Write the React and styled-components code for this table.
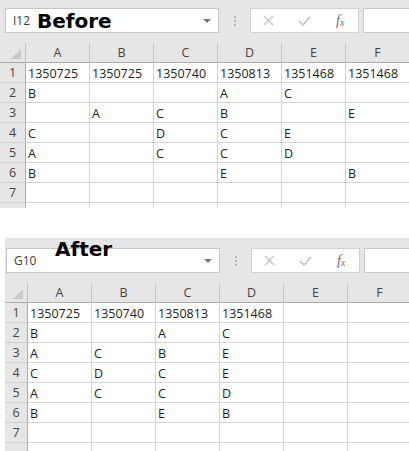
// Styled Components
import styled, { createGlobalStyle } from "styled-components";

const COLUMNS = ["A", "B", "C", "D", "E", "F"];

const before = [
    ["1350725", "1350725", "1350740", "1350813", "1351468", "1351468"],
    ["B", "", "", "A", "C", ""],
    ["", "A", "C", "B", "", "E"],
    ["C", "", "D", "C", "E", ""],
    ["A", "", "C", "C", "D", ""],
    ["B", "", "", "E", "", "B"],
    ["", "", "", "", "", ""],
];

const after = [
    ["1350725", "1350740", "1350813", "1351468", "", ""],
    ["B", "", "A", "C", "", ""],
    ["A", "C", "B", "E", "", ""],
    ["C", "D", "C", "E", "", ""],
    ["A", "C", "C", "D", "", ""],
    ["B", "", "E", "B", "", ""],
    ["", "", "", "", "", ""],
];

// empty row that peeks out under the last numbered one
const filler = ["", "", "", "", "", ""];

const Sheet = ({ name, title, titleLeft, titleTop, data, padTop, boxLeft, headWidth, gridHeight, left, top }) => {
    return (
        <SheetFrame $left={left} $top={top}>

            {/* Name box and formula bar */}
            <Toolbar $padTop={padTop}>
                <NameBox $left={boxLeft}>
                    <NameText>{name}</NameText>
                    <Caret />
                </NameBox>

                <Grip>
                    <span />
                    <span />
                    <span />
                </Grip>

                <FormulaButtons>
                    <IconSlot>
                        <svg width="11" height="11" viewBox="0 0 11 11">
                            <path d="M1 1 L10 10 M10 1 L1 10" stroke="#c4c4c4" strokeWidth="1.4" fill="none" />
                        </svg>
                    </IconSlot>
                    <IconSlot>
                        <svg width="13" height="10" viewBox="0 0 13 10">
                            <path d="M1 5 L5 9 L12 1" stroke="#c4c4c4" strokeWidth="1.6" fill="none" />
                        </svg>
                    </IconSlot>
                    <IconSlot>
                        <Fx>f<sub>x</sub></Fx>
                    </IconSlot>
                </FormulaButtons>

                <FormulaInput />
            </Toolbar>

            {/* Grid */}
            <Grid $head={headWidth} $height={gridHeight}>
                <Corner>
                    <CornerTriangle />
                </Corner>
                {COLUMNS.map((col) => (
                    <ColHeader key={col}>{col}</ColHeader>
                ))}

                {[...data, filler].map((row, r) => (
                    <Row key={r}>
                        <RowHeader>{r < data.length ? r + 1 : ""}</RowHeader>
                        {row.map((value, c) => (
                            <Cell key={c}>{value}</Cell>
                        ))}
                    </Row>
                ))}
            </Grid>

            <Title $left={titleLeft} $top={titleTop}>{title}</Title>
        </SheetFrame>
    );
};

const App = () => {
    return (
        <Page>
            <GlobalStyle />

            <Sheet
                name="I12"
                title="Before"
                titleLeft={37}
                titleTop={9}
                data={before}
                padTop={8}
                boxLeft={5}
                headWidth={26}
                gridHeight={165}
                left={0}
                top={0}
            />

            <Sheet
                name="G10"
                title="After"
                titleLeft={50}
                titleTop={-1}
                data={after}
                padTop={10}
                boxLeft={1}
                headWidth={23}
                gridHeight={170}
                left={5}
                top={30}
            />

        </Page>
    );
};

const GlobalStyle = createGlobalStyle`
    html, body {
        margin: 0;
        padding: 0;
        background: #ffffff;
    }

    body {
        width: 409px;
        height: 451px;
        overflow: hidden;
        font-family: "Open Sans", "DejaVu Sans", sans-serif;
    }
`

const Page = styled.main`
    width: 409px;
    height: 451px;
    overflow: hidden;
    display: flex;
    flex-direction: column;
`

const SheetFrame = styled.section`
    position: relative;
    flex: none;
    margin-left: ${(p) => p.$left}px;
    margin-top: ${(p) => p.$top}px;
    background: #e6e6e6;
`

const Toolbar = styled.div`
    display: flex;
    align-items: center;
    overflow: hidden;
    padding-top: ${(p) => p.$padTop}px;
    padding-bottom: 10px;
    background: #e6e6e6;
`

const NameBox = styled.div`
    box-sizing: border-box;
    width: 214px;
    height: 25px;
    flex: none;
    margin-left: ${(p) => p.$left}px;
    display: flex;
    align-items: center;
    justify-content: space-between;
    padding: 0 7px;
    background: #ffffff;
    border: 1px solid #c6c6c6;
`

const NameText = styled.span`
    font-size: 12px;
    color: #3c3c3c;
`

const Caret = styled.span`
    width: 0;
    height: 0;
    border-left: 4px solid transparent;
    border-right: 4px solid transparent;
    border-top: 4px solid #777777;
`

const Grip = styled.div`
    width: 31px;
    flex: none;
    display: flex;
    flex-direction: column;
    align-items: center;
    gap: 2px;

    span {
        width: 2px;
        height: 2px;
        background: #b4b4b4;
    }
`

const FormulaButtons = styled.div`
    box-sizing: border-box;
    width: 109px;
    height: 25px;
    flex: none;
    display: grid;
    grid-template-columns: repeat(3, 1fr);
    align-items: center;
    background: #ffffff;
    border: 1px solid #d2d2d2;
`

const IconSlot = styled.div`
    display: flex;
    align-items: center;
    justify-content: center;
`

const Fx = styled.span`
    font-family: "Liberation Serif", "DejaVu Serif", serif;
    font-style: italic;
    font-size: 14px;
    color: #6e6e6e;
    line-height: 1;

    sub {
        font-size: 10px;
        vertical-align: -1px;
    }
`

const FormulaInput = styled.div`
    box-sizing: border-box;
    flex: 1 0 60px;
    height: 25px;
    margin-left: 4px;
    background: #ffffff;
    border: 1px solid #c6c6c6;
`

const Grid = styled.div`
    display: grid;
    grid-template-columns: ${(p) => p.$head}px repeat(6, 64px);
    grid-auto-rows: 20px;
    height: ${(p) => p.$height}px;
    overflow: hidden;
    background: #ffffff;
`

const Row = styled.div`
    display: contents;
`

const Corner = styled.div`
    position: relative;
    background: #e6e6e6;
    border-right: 1px solid #c2c2c2;
    border-bottom: 1px solid #ababab;
`

const CornerTriangle = styled.span`
    position: absolute;
    right: 4px;
    bottom: 3px;
    width: 0;
    height: 0;
    border-left: 10px solid transparent;
    border-bottom: 10px solid #c9c9c9;
`

const ColHeader = styled.div`
    display: flex;
    align-items: center;
    justify-content: center;
    font-size: 12.5px;
    color: #444444;
    background: #e6e6e6;
    border-right: 1px solid #c8c8c8;
    border-bottom: 1px solid #ababab;
`

const RowHeader = styled.div`
    display: flex;
    align-items: center;
    justify-content: center;
    font-size: 12.5px;
    color: #444444;
    background: #e6e6e6;
    border-right: 1px solid #ababab;
    border-bottom: 1px solid #d0d0d0;
`

const Cell = styled.div`
    display: flex;
    align-items: center;
    padding: 1px 0 0 2px;
    font-size: 12.5px;
    color: #1e1e1e;
    white-space: nowrap;
    overflow: hidden;
    border-right: 1px solid #d4d4d4;
    border-bottom: 1px solid #d4d4d4;
`

const Title = styled.div`
    position: absolute;
    left: ${(p) => p.$left}px;
    top: ${(p) => p.$top}px;
    font-family: "DejaVu Sans", sans-serif;
    font-weight: bold;
    font-size: 20px;
    line-height: 1.2;
    color: #000000;
`

export default App;
